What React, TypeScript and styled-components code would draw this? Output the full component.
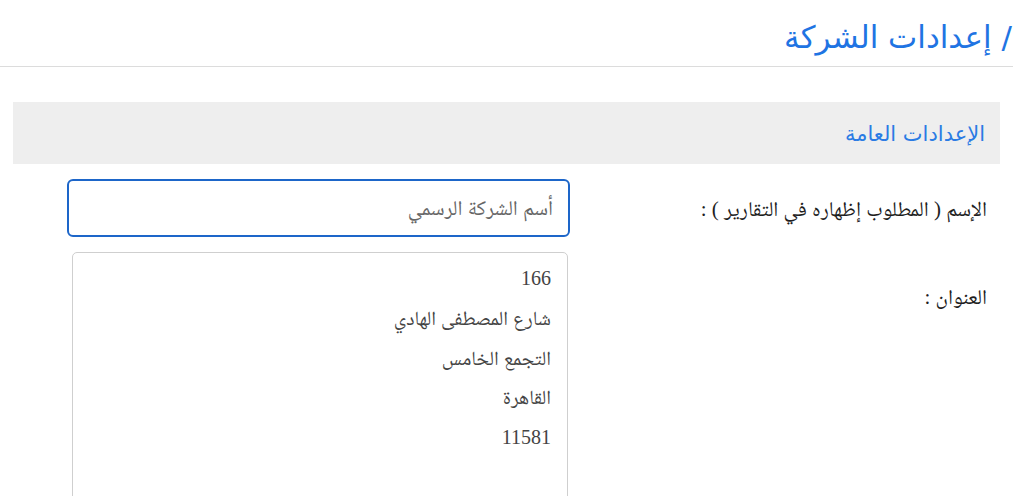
import React from "react";
import styled, { createGlobalStyle } from "styled-components";

const Global = createGlobalStyle`
  html, body { margin: 0; padding: 0; background: #ffffff; }
  body { direction: rtl; font-family: "Liberation Serif", "Noto Naskh Arabic", "Amiri", "DejaVu Sans", serif; }
  * { box-sizing: border-box; }
`;

const Page = styled.div`
  width: 1024px;
  height: 496px;
  overflow: hidden;
  background: #fff;
`;

const TitleBar = styled.header`
  height: 67px;
  margin-right: 11px;
  border-bottom: 1px solid #dcdcdc;
  padding: 16px 1px 0 0;
`;

const Title = styled.h1`
  margin: 0;
  font-family: "DejaVu Sans", "Noto Sans", sans-serif;
  font-weight: normal;
  font-size: 31px;
  line-height: 42px;
  color: #1f74e3;
`;

const Content = styled.main`
  margin: 35px 24px 0 13px;
`;

const SectionHead = styled.div`
  height: 62px;
  background: #eeeeee;
  display: flex;
  align-items: center;
  padding: 2px 15px 0 0;
  font-family: "DejaVu Sans", "Noto Sans", sans-serif;
  font-size: 21px;
  color: #2a7be4;
`;

const Row = styled.div`
  display: grid;
  grid-template-columns: 430px 1fr;
  align-items: start;
`;

const Label = styled.label`
  padding-right: 13px;
  font-size: 21px;
  color: #1e1e1e;
  white-space: nowrap;
`;

const NameRow = styled(Row)`
  margin-top: 15px;
  ${Label} { padding-top: 15px; }
`;

const AddressRow = styled(Row)`
  margin-top: 15px;
  ${Label} { padding-top: 30px; }
`;

const Field = styled.div<{ $inset: number }>`
  padding-right: ${(p) => p.$inset}px;
`;

const NameInput = styled.input`
  display: block;
  width: 503px;
  height: 58px;
  border: 2px solid #1d66c9;
  border-radius: 6px;
  padding: 0 15px;
  direction: rtl;
  font-family: "Liberation Serif", "Noto Naskh Arabic", "Amiri", "DejaVu Sans", serif;
  font-size: 21px;
  color: #333;
  outline: none;
  &::placeholder { color: #666; }
`;

const AddressBox = styled.textarea`
  display: block;
  width: 496px;
  height: 260px;
  border: 1px solid #cfcfcf;
  border-radius: 5px;
  padding: 6px 16px;
  direction: rtl;
  resize: none;
  font-family: "Liberation Serif", "Noto Naskh Arabic", "Amiri", "DejaVu Sans", serif;
  font-size: 20px;
  line-height: 39.8px;
  color: #444;
  outline: none;
`;

export default function App() {
  return (
    <Page>
      <Global />
      <TitleBar>
        <Title>/ إعدادات الشركة</Title>
      </TitleBar>
      <Content>
        <SectionHead>الإعدادات العامة</SectionHead>
        <NameRow>
          <Label>الإسم ( المطلوب إظهاره في التقارير ) :</Label>
          <Field $inset={0}>
            <NameInput placeholder="أسم الشركة الرسمي" />
          </Field>
        </NameRow>
        <AddressRow>
          <Label>العنوان :</Label>
          <Field $inset={2}>
            <AddressBox
              readOnly
              defaultValue={"166\nشارع المصطفى الهادي\nالتجمع الخامس\nالقاهرة\n11581"}
            />
          </Field>
        </AddressRow>
      </Content>
    </Page>
  );
}
